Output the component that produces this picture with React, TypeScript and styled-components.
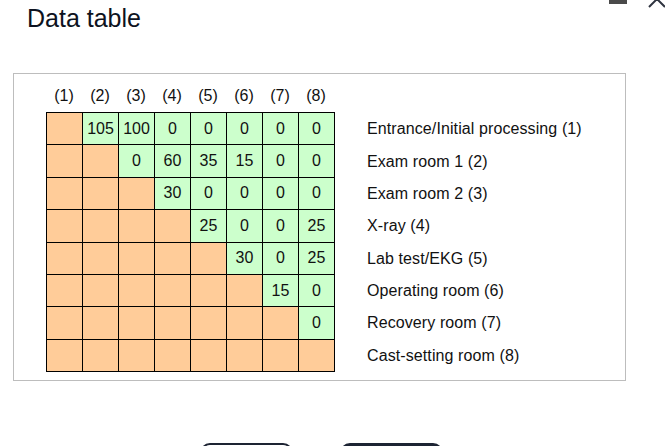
import styled, { createGlobalStyle } from 'styled-components';

const GlobalStyle = createGlobalStyle`
  html, body {
    margin: 0;
    padding: 0;
    background: #ffffff;
    overflow: hidden;
  }
  body {
    font-family: "Liberation Sans", Arial, sans-serif;
    color: #111;
  }
`;

const Page = styled.div`
  width: 665px;
  height: 446px;
  padding-left: 13px;
  box-sizing: border-box;
  overflow: hidden;
`;

const TopRow = styled.div`
  display: flex;
  justify-content: space-between;
  align-items: flex-start;
  height: 73px;
`;

const Title = styled.h1`
  margin: 0;
  padding: 3px 0 0 14px;
  font-size: 25px;
  font-weight: 400;
  line-height: 30px;
  color: #0d1220;
`;

const WindowControls = styled.div`
  display: flex;
  align-items: flex-start;
  gap: 21px;
  margin-top: -9px;
`;

const Panel = styled.div`
  width: 613px;
  box-sizing: border-box;
  border: 1px solid #bdbdbd;
  padding: 10px 0 8px 32px;
  display: grid;
  grid-template-columns: 289px auto;
  grid-template-rows: 24px auto;
  column-gap: 32px;
  row-gap: 4px;
`;

const ColumnHeads = styled.div`
  display: grid;
  grid-template-columns: repeat(8, 36px);
  font-size: 16px;
  line-height: 24px;
  text-align: center;
`;

const Matrix = styled.div`
  grid-row: 2;
  display: grid;
  grid-template-columns: repeat(8, 36px);
  grid-auto-rows: 32.375px;
  border-left: 1px solid #000;
  border-top: 1px solid #000;
  width: 289px;
  box-sizing: border-box;
`;

const Cell = styled.div<{ $open: boolean }>`
  box-sizing: border-box;
  border-right: 1px solid #000;
  border-bottom: 1px solid #000;
  background: ${(p) => (p.$open ? '#ccffcc' : '#ffcc99')};
  display: flex;
  align-items: center;
  justify-content: center;
  font-size: 16px;
  color: #111;
`;

const Legend = styled.div`
  grid-row: 2;
  grid-column: 2;
  display: grid;
  grid-auto-rows: 32.375px;
  padding-top: 1px;
`;

const LegendItem = styled.div`
  display: flex;
  align-items: center;
  font-size: 16px;
  letter-spacing: 0.1px;
  color: #111;
  white-space: nowrap;
`;

const Footer = styled.div`
  display: flex;
  gap: 47px;
  padding: 62px 0 0 187px;
`;

// only the top edge of the dialog buttons is in view
const Button = styled.button<{ $primary?: boolean }>`
  width: ${(p) => (p.$primary ? '103px' : '93px')};
  height: 40px;
  border-radius: 10px;
  border: 2px solid #1d2433;
  background: ${(p) => (p.$primary ? '#1d2433' : '#ffffff')};
  padding: 0;
`;

const rooms = [
  'Entrance/Initial processing (1)',
  'Exam room 1 (2)',
  'Exam room 2 (3)',
  'X-ray (4)',
  'Lab test/EKG (5)',
  'Operating room (6)',
  'Recovery room (7)',
  'Cast-setting room (8)',
];

// upper triangle only, row i lists columns i+1..8
const flows: number[][] = [
  [105, 100, 0, 0, 0, 0, 0],
  [0, 60, 35, 15, 0, 0],
  [30, 0, 0, 0, 0],
  [25, 0, 0, 25],
  [30, 0, 25],
  [15, 0],
  [0],
  [],
];

export default function App() {
  return (
    <Page>
      <GlobalStyle />
      <TopRow>
        <Title>Data table</Title>
        <WindowControls>
          <svg width="18" height="13" viewBox="0 0 18 13">
            <rect x="0" y="8" width="18" height="5" fill="#4a4a4a" />
          </svg>
          <svg width="17" height="17" viewBox="0 0 17 17">
            <path d="M1 0 L17 16 M17 0 L1 16" stroke="#2f3440" strokeWidth="2" fill="none" />
          </svg>
        </WindowControls>
      </TopRow>

      <Panel>
        <ColumnHeads>
          {rooms.map((_, i) => (
            <span key={i}>({i + 1})</span>
          ))}
        </ColumnHeads>
        <Matrix>
          {rooms.map((_, r) =>
            rooms.map((_, c) => {
              const open = c > r;
              return (
                <Cell key={`${r}-${c}`} $open={open}>
                  {open ? flows[r][c - r - 1] : ''}
                </Cell>
              );
            })
          )}
        </Matrix>
        <Legend>
          {rooms.map((name) => (
            <LegendItem key={name}>{name}</LegendItem>
          ))}
        </Legend>
      </Panel>

      <Footer>
        <Button aria-label="Cancel" />
        <Button $primary aria-label="Done" />
      </Footer>
    </Page>
  );
}
